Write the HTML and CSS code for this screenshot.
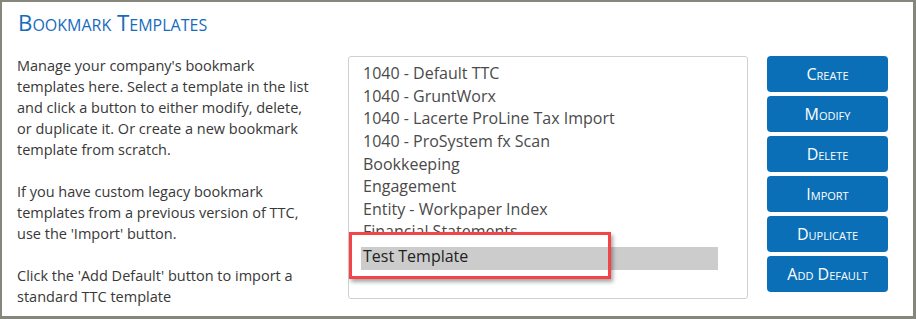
FILE: index.html
```html
<!DOCTYPE html>
<html>
<head>
<meta charset="utf-8">
<link rel="stylesheet" href="styles.css">
</head>
<body>
<div class="frame">
  <h1 class="title">Bookmark Templates</h1>
  <div class="content">
    <div class="desc">
      <p>Manage your company's bookmark templates here. Select a template in the list and click a button to either modify, delete, or duplicate it. Or create a new bookmark template from scratch.</p>
      <p>If you have custom legacy bookmark templates from a previous version of TTC, use the 'Import' button.</p>
      <p>Click the 'Add Default' button to import a standard TTC template</p>
    </div>
    <div class="list">
      <div class="item">1040 - Default TTC</div>
      <div class="item">1040 - GruntWorx</div>
      <div class="item">1040 - Lacerte ProLine Tax Import</div>
      <div class="item">1040 - ProSystem fx Scan</div>
      <div class="item">Bookkeeping</div>
      <div class="item">Engagement</div>
      <div class="item">Entity - Workpaper Index</div>
      <div class="item">Financial Statements</div>
      <div class="item selected">Test Template</div>
      <div class="callout"></div>
    </div>
    <div class="buttons">
      <button class="btn">Create</button>
      <button class="btn">Modify</button>
      <button class="btn">Delete</button>
      <button class="btn">Import</button>
      <button class="btn">Duplicate</button>
      <button class="btn">Add Default</button>
    </div>
  </div>
</div>
</body>
</html>
```
FILE: styles.css
```css
html, body {
  margin: 0;
  padding: 0;
  background: #ffffff;
}
.frame {
  box-sizing: border-box;
  width: 916px;
  height: 319px;
  border-style: solid;
  border-color: #85867c;
  border-width: 2px 3px 3px 2px;
  padding: 8px 0 0 15px;
  font-family: "Open Sans", "Liberation Sans", sans-serif;
  overflow: hidden;
}
.title {
  margin: 0 0 20px 1px;
  font-size: 22.3px;
  line-height: 26px;
  font-weight: normal;
  font-variant: small-caps;
  color: #176bbd;
}
.content {
  display: flex;
  align-items: flex-start;
}
.desc {
  flex: 0 0 298px;
  margin-right: 33px;
  margin-top: -1px;
  font-size: 14.5px;
  line-height: 21px;
  color: #383838;
}
.desc p {
  margin: 0 0 21px 0;
}
.list {
  position: relative;
  box-sizing: border-box;
  flex: 0 0 400px;
  height: 243px;
  border: 1px solid #cfd0d6;
  border-radius: 3px;
  padding: 7.3px 29px 0 12px;
  margin-right: 19px;
  font-size: 16px;
  line-height: 19px;
  color: #4a4a4a;
}
.item {
  height: 22.6px;
  padding-left: 2px;
  white-space: nowrap;
}
.item.selected {
  margin-top: 1.6px;
  height: 23.3px;
  background: #cccccc;
  color: #222222;
}
.callout {
  position: absolute;
  left: 0;
  top: 175px;
  width: 256px;
  height: 41px;
  border: 3px solid #f44448;
  box-shadow: 2px 3px 4px rgba(0, 0, 0, 0.35);
  pointer-events: none;
}
.callout::before {
  content: "";
  position: absolute;
  left: 0;
  top: 0;
  right: 0;
  height: 11.7px;
  background: #ffffff;
}
.buttons {
  flex: 0 0 121px;
  display: flex;
  flex-direction: column;
  gap: 4px;
}
.btn {
  height: 36px;
  width: 121px;
  border: none;
  border-radius: 4px;
  background: #0b6fb8;
  color: #ffffff;
  font-family: "Open Sans", "Liberation Sans", sans-serif;
  font-size: 16px;
  font-variant: small-caps;
  padding: 0;
  line-height: 36px;
}
```
